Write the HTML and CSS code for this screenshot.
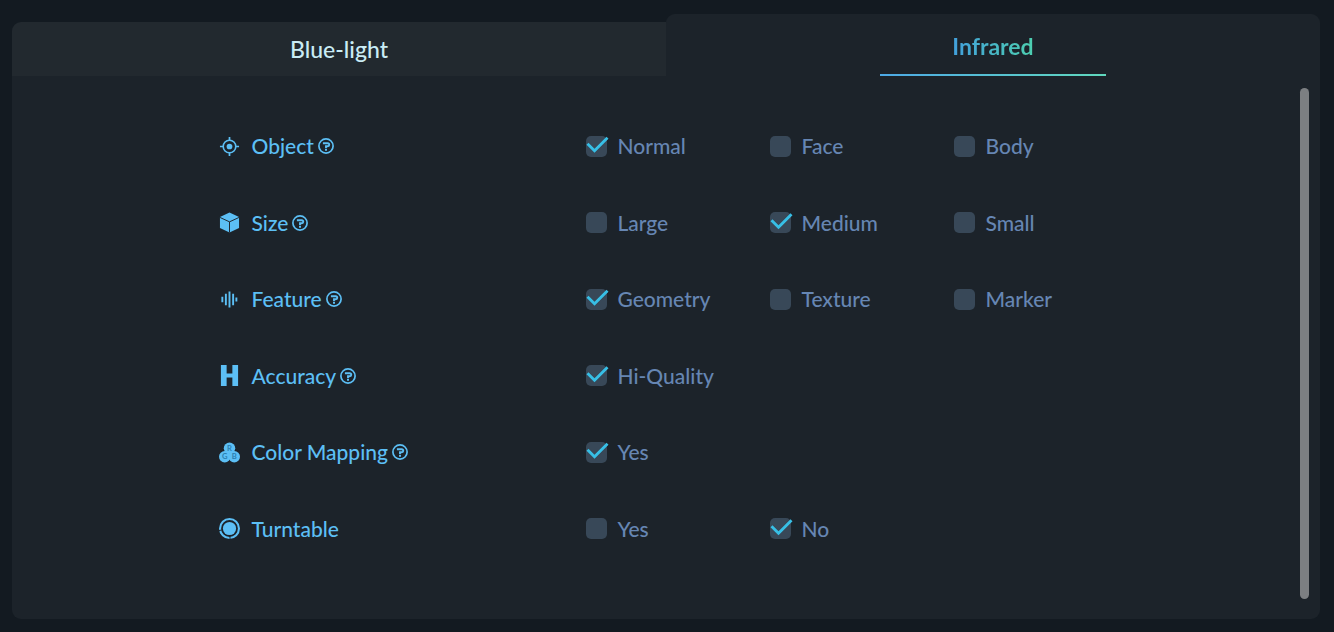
FILE: index.html
```html
<!DOCTYPE html>
<html lang="en">

<head>
	<meta charset="UTF-8">
	<meta name="viewport" content="width=device-width, initial-scale=1.0">
	<title>Scan settings</title>
	<link rel="stylesheet" href="styles.css">
</head>

<body>
	<svg class="sprite" aria-hidden="true">
		<symbol id="help" viewBox="0 0 16 16">
			<circle cx="8" cy="8" r="7.1" fill="none" stroke="currentColor" stroke-width="1.7" />
			<path d="M4.9 5.2h4.8a1.5 1.5 0 0 1 0 3.1H8v1.6" fill="none" stroke="currentColor" stroke-width="1.9" />
			<path d="M7 10.8h2v1.9H7z" fill="currentColor" />
		</symbol>
	</svg>
	<div class="panel">
		<div class="tabs" role="tablist">
			<button type="button" class="tab" role="tab" aria-selected="false">Blue-light</button>
			<button type="button" class="tab active" role="tab" aria-selected="true"><span>Infrared</span></button>
		</div>
		<div class="content">
			<form class="settings">
				<div class="row" role="group" aria-labelledby="object">
					<div class="title">
						<svg class="icon" viewBox="0 0 22 22">
							<circle cx="11" cy="11" r="6.6" fill="none" stroke="currentColor" stroke-width="1.7" />
							<circle cx="11" cy="11" r="3" fill="currentColor" />
							<path d="M11 1v4M11 17v4M1 11h4M17 11h4" stroke="currentColor" stroke-width="1.8" />
						</svg>
						<span id="object">Object</span>
						<button type="button" class="help" aria-label="About Object"><svg><use href="#help" /></svg></button>
					</div>
					<label><input type="checkbox" checked>Normal</label>
					<label><input type="checkbox">Face</label>
					<label><input type="checkbox">Body</label>
				</div>
				<div class="row" role="group" aria-labelledby="size">
					<div class="title">
						<svg class="icon" viewBox="0 0 22 22">
							<path d="M11 0.5l10 4.8v11.4L11 21.5l-10-4.8V5.3z" fill="currentColor" />
							<path d="M1 5.7l10 4.6 10-4.6M11 10.3v11.2" class="cut" />
						</svg>
						<span id="size">Size</span>
						<button type="button" class="help" aria-label="About Size"><svg><use href="#help" /></svg></button>
					</div>
					<label><input type="checkbox">Large</label>
					<label><input type="checkbox" checked>Medium</label>
					<label><input type="checkbox">Small</label>
				</div>
				<div class="row" role="group" aria-labelledby="feature">
					<div class="title">
						<svg class="icon" viewBox="0 0 22 22">
							<path d="M3.5 8v6M7.2 5v12M11 2.5v17M14.8 5v12M18.2 9v4" stroke="currentColor" stroke-width="2" />
						</svg>
						<span id="feature">Feature</span>
						<button type="button" class="help" aria-label="About Feature"><svg><use href="#help" /></svg></button>
					</div>
					<label><input type="checkbox" checked>Geometry</label>
					<label><input type="checkbox">Texture</label>
					<label><input type="checkbox">Marker</label>
				</div>
				<div class="row" role="group" aria-labelledby="accuracy">
					<div class="title">
						<svg class="icon" viewBox="0 0 22 22">
							<path d="M2 0h6v9h6V0h6v22h-6v-9H8v9H2z" fill="currentColor" />
						</svg>
						<span id="accuracy">Accuracy</span>
						<button type="button" class="help" aria-label="About Accuracy"><svg><use href="#help" /></svg></button>
					</div>
					<label><input type="checkbox" checked>Hi-Quality</label>
				</div>
				<div class="row" role="group" aria-labelledby="mapping">
					<div class="title">
						<svg class="icon" viewBox="0 0 22 22">
							<circle cx="11" cy="6.5" r="6" fill="currentColor" />
							<circle cx="6" cy="15.5" r="6" fill="currentColor" />
							<circle cx="16" cy="15.5" r="6" fill="currentColor" />
							<g class="rgb">
								<text x="11" y="9">R</text>
								<text x="6" y="18">G</text>
								<text x="16" y="18">B</text>
							</g>
						</svg>
						<span id="mapping">Color Mapping</span>
						<button type="button" class="help" aria-label="About Color Mapping"><svg><use href="#help" /></svg></button>
					</div>
					<label><input type="checkbox" checked>Yes</label>
				</div>
				<div class="row" role="group" aria-labelledby="turntable">
					<div class="title">
						<svg class="icon" viewBox="0 0 22 22">
							<circle cx="11" cy="11" r="6.9" fill="currentColor" />
							<circle cx="11" cy="11" r="9.9" fill="none" stroke="currentColor" stroke-width="2.2" />
							<path d="M0 13.2l3.5-.8M11.6 22l-.2-3.5" class="cut" />
						</svg>
						<span id="turntable">Turntable</span>
					</div>
					<label><input type="checkbox">Yes</label>
					<label><input type="checkbox" checked>No</label>
				</div>
			</form>
			<div class="scrollbar"></div>
		</div>
	</div>
</body>

</html>
```
FILE: styles.css
```css
body
{
	font-family: Lato, 'Liberation Sans', sans-serif;
	font-size: 21px;
	font-weight: 500;
	line-height: 28px;
	background-color: #131a21;
	color: #6686b3;
	display: flex;
	min-height: 100vh;
	margin: 0;
	padding: 14px 14px 13px 12px;
	box-sizing: border-box;
}

.sprite
{
	display: none;
}

.panel
{
	flex: 1;
	display: flex;
	flex-direction: column;
}

.tabs
{
	display: flex;
	align-items: flex-end;
}

.tab
{
	flex: 1;
	height: 54px;
	padding: 0;
	border: none;
	border-radius: 9px 0 0 0;
	background-color: #22292f;
	color: #c9ecf5;
	font: inherit;
	font-size: 23px;
	cursor: pointer;
}

.tab.active
{
	display: flex;
	justify-content: center;
	height: 62px;
	border-radius: 9px 9px 0 0;
	background: linear-gradient(90deg, #4da9e6, #60d8bd) center bottom / 226px 2px no-repeat #1c232a;
}

.tab.active span
{
	padding-top: 18px;
	background: linear-gradient(90deg, #429fdc, #4dcfb0);
	background-clip: text;
	color: transparent;
	font-weight: 700;
}

.content
{
	flex: 1;
	display: flex;
	background-color: #1c232a;
	border-radius: 0 0 9px 9px;
}

.settings
{
	flex: 1;
	display: flex;
	flex-direction: column;
	align-items: center;
	padding: 32px 0 52px;
}

.row
{
	flex: 1;
	display: grid;
	grid-template-columns: 367px 184px 184px 140px;
	align-items: center;
	min-height: 48px;
}

.title
{
	display: flex;
	align-items: center;
	color: #5cbff5;
}

.icon
{
	width: 21px;
	height: 21px;
	margin-right: 12px;
}

.cut
{
	fill: none;
	stroke: #1c232a;
}

.rgb
{
	fill: #2b7fb0;
	font-size: 8px;
	font-weight: bold;
	text-anchor: middle;
}

.help
{
	width: 16px;
	height: 16px;
	margin-left: 4px;
	padding: 0;
	border: none;
	background: none;
	color: inherit;
	cursor: pointer;
}

.help svg
{
	display: block;
	width: 16px;
	height: 16px;
}

label
{
	display: flex;
	align-items: center;
	cursor: pointer;
}

input
{
	appearance: none;
	width: 21px;
	height: 21px;
	margin: 0 11px 0 0;
	border-radius: 5px;
	background-color: #384858;
}

/* tick runs slightly past the right edge of the box */
input:checked::after
{
	content: '';
	display: block;
	width: 24px;
	height: 21px;
	background-color: #37bfe6;
	clip-path: polygon(1px 9px, 3px 7px, 9px 13px, 21px 1px, 23px 3px, 9px 17px);
}

.scrollbar
{
	width: 9px;
	margin: 12px 11px 20px 0;
	border-radius: 5px;
	background-color: #7c7f82;
}
```
